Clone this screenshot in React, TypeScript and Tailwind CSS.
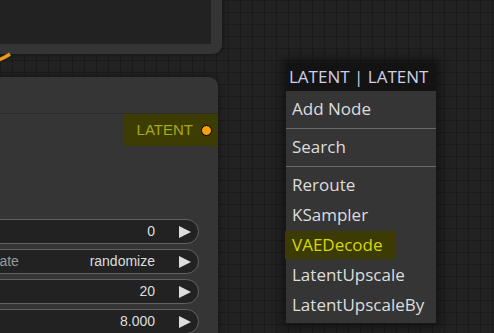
import React from 'react';

const items = ['Reroute', 'KSampler', 'VAEDecode', 'LatentUpscale', 'LatentUpscaleBy'];

const widgets = [
  { label: 'seed', value: '0' },
  { label: 'control_after_generate', value: 'randomize' },
  { label: 'steps', value: '20' },
  { label: 'cfg', value: '8.000' },
];

function Arrow() {
  return (
    <svg width="14" height="14" viewBox="0 0 14 14" className="shrink-0">
      <polygon points="1,1 13,7 1,13" fill="#dddddd" />
    </svg>
  );
}

export default function App() {
  return (
    <div className="relative w-[494px] h-[333px] overflow-hidden bg-[#222222] bg-[linear-gradient(to_right,#1b1b1b_1px,transparent_1px),linear-gradient(to_bottom,#1b1b1b_1px,transparent_1px)] bg-[size:12px_12px] font-['Liberation_Sans',Arial,sans-serif]">
      {/* top node (image preview) */}
      <div className="absolute left-[-10px] top-[-10px] w-[232px] h-[64px] bg-[#353535] rounded-br-[9px] pr-[11px] pb-[10px] shadow-[0_0_6px_rgba(0,0,0,0.5)]">
        <div className="w-full h-full bg-[#222222]" />
      </div>

      {/* wire */}
      <svg className="absolute left-0 top-[48px]" width="14" height="16" viewBox="0 0 14 16">
        <path d="M-4 13 C2 11 5 9 10 6" stroke="#e99a1c" strokeWidth="3.5" fill="none" />
      </svg>

      {/* KSampler node */}
      <div className="absolute left-[-160px] top-[77px] w-[378px] h-[280px] bg-[#353535] rounded-tr-[9px] shadow-[0_0_6px_rgba(0,0,0,0.5)] flex flex-col">
        <div className="h-[37px] border-b border-[#2b2b2b]" />
        <div className="flex justify-end">
          <div className="flex items-center justify-end gap-[8px] h-[32px] w-[94px] pr-[6px] bg-[#3d3c03]">
            <span className="text-[15px] text-[#aaa61c]">LATENT</span>
            <span className="w-[11px] h-[11px] rounded-full bg-[#f5a00f] border border-black" />
          </div>
        </div>
        <div className="mt-[73px] flex flex-col gap-[5px] pl-[15px] pr-[19px]">
          {widgets.map((w) => (
            <div
              key={w.label}
              className="h-[25px] rounded-full bg-[#222222] border border-[#616161] flex items-center justify-between pl-[22px] pr-[6px] text-[14px]"
            >
              <span className="text-[#999999]">{w.label}</span>
              <div className="flex items-center gap-[23px]">
                <span className="text-[#dddddd]">{w.value}</span>
                <Arrow />
              </div>
            </div>
          ))}
        </div>
      </div>

      {/* context menu */}
      <div className="absolute left-[286px] top-[63px] w-[150px] shadow-[0_0_10px_4px_rgba(0,0,0,0.45)] font-['Open_Sans','Noto_Sans',sans-serif]">
        <div className="h-[28px] bg-[#131313] text-[#cfcfe6] text-[17px] flex items-center pl-[3px] whitespace-nowrap">LATENT | LATENT</div>
        <div className="bg-[#353535] text-[#dddddd] text-[17px] pt-[3px] pb-[3px] whitespace-nowrap">
          <div className="h-[30px] flex items-center pl-[6px]">Add Node</div>
          <div className="pt-[4px] pb-[3px]"><div className="h-px bg-[#6a6a6a]" /></div>
          <div className="h-[30px] flex items-center pl-[6px]">Search</div>
          <div className="pt-[4px] pb-[3px]"><div className="h-px bg-[#6a6a6a]" /></div>
          {items.map((it) =>
            it === 'VAEDecode' ? (
              <div key={it} className="h-[30px] flex items-center">
                <div className="h-[28px] w-[110px] ml-[-1px] pl-[7px] flex items-center bg-[#3c3b03] text-[#d8d700]">{it}</div>
              </div>
            ) : (
              <div key={it} className="h-[30px] flex items-center pl-[6px]">{it}</div>
            )
          )}
        </div>
      </div>
    </div>
  );
}
